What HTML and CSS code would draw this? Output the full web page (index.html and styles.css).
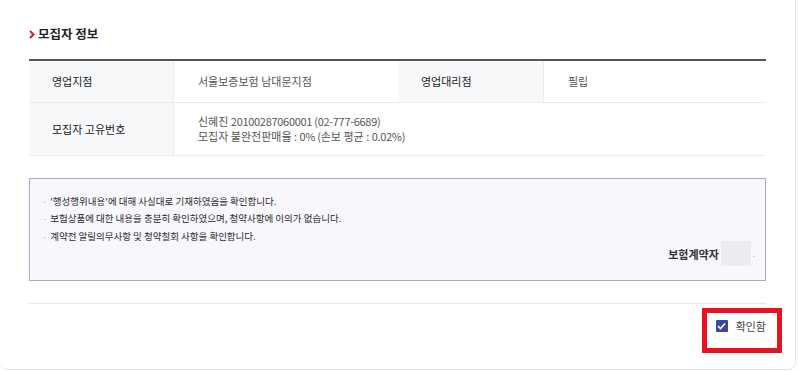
FILE: index.html
```html
<!doctype html>
<html>
    <head>
        <link rel="stylesheet" href="styles.css">
    </head>
    <body>
        <div class="card">
            <h3 class="title">
                <svg class="arrow" width="6" height="9" viewBox="0 0 6 9"><path d="M1 1 L4.5 4.5 L1 8" fill="none" stroke="#c4233a" stroke-width="2"/></svg>
                모집자 정보
            </h3>
            <table class="info">
                <tr class="r1">
                    <th>영업지점</th>
                    <td>서울보증보험 남대문지점</td>
                    <th>영업대리점</th>
                    <td>필립</td>
                </tr>
                <tr class="r2">
                    <th>모집자 고유번호</th>
                    <td colspan="3">신혜진 <span class="num">20100287060001 (02-777-6689)</span><br>모집자 불완전판매율 : <span class="num">0% (</span>손보 평균 : <span class="num">0.02%)</span></td>
                </tr>
            </table>
            <div class="notice">
                <ul>
                    <li>'행성행위내용'에 대해 사실대로 기재하였음을 확인합니다.</li>
                    <li>보험상품에 대한 내용을 충분히 확인하였으며, 청약사항에 이의가 없습니다.</li>
                    <li>계약전 알릴의무사항 및 청약철회 사항을 확인합니다.</li>
                </ul>
                <div class="sign">
                    <span class="who">보험계약자</span>
                    <span class="blur"></span>
                    <span class="dot">.</span>
                </div>
            </div>
            <div class="foot">
                <label class="check">
                    <span class="box"><svg width="9" height="8" viewBox="0 0 9 8"><path d="M1 4 L3.5 6.5 L8 1.5" fill="none" stroke="#fff" stroke-width="1.6"/></svg></span>
                    확인함
                </label>
                <div class="mark"></div>
            </div>
        </div>
    </body>
</html>
```

FILE: styles.css
```css
body {
    margin: 0;
    background: #fff;
    font-family: "Noto Sans CJK KR", "Noto Sans", sans-serif;
}
.card {
    width: 737px;
    height: 345px;
    padding: 24px 29px 0 29px;
    margin-right: 4px;
    border-right: 1px solid #e4e4e4;
    border-bottom: 1px solid #e4e4e4;
    border-radius: 0 0 8px 8px;
    position: relative;
}
.title {
    margin: 0 0 15px;
    height: 20px;
    line-height: 20px;
    font-size: 12.5px;
    font-weight: 700;
    color: #222;
    display: flex;
    align-items: center;
    gap: 3px;
}
.info {
    width: 100%;
    border-collapse: collapse;
    border-top: 2px solid #555;
    font-size: 11px;
}
.info th, .info td {
    text-align: left;
    border-bottom: 1px solid #ebebeb;
    padding: 0;
}
.info th {
    background: #f7f8fa;
    font-weight: 400;
    color: #222;
    padding-left: 23px;
    border-right: 1px solid #ebebeb;
}
.info td {
    color: #555;
    padding-left: 24px;
    line-height: 15px;
}
.info .num {
    letter-spacing: -0.3px;
}
.info th:nth-child(1) { width: 121px; }
.info td:nth-child(2) { width: 200px; }
.info th:nth-child(3) { width: 122px; }
.r1 { height: 42px; }
.r2 { height: 53px; }
.notice {
    margin-top: 22px;
    height: 103px;
    border: 1px solid #a9adc3;
    background: #f8f8fc;
    padding: 14px 15px 0 13px;
    box-sizing: border-box;
}
.notice ul {
    margin: 0;
    padding: 0;
    list-style: none;
    font-size: 9.5px;
    line-height: 17.5px;
    color: #2a2a2a;
}
.notice li::before {
    content: "·";
    font-family: "Liberation Sans", sans-serif;
    color: #999;
    margin-right: 4px;
}
.sign {
    display: flex;
    justify-content: flex-end;
    align-items: center;
    margin-top: -4px;
}
.who {
    font-size: 11px;
    font-weight: 700;
    color: #333;
}
.blur {
    width: 30px;
    height: 25px;
    background: #ececee;
    margin-left: 2px;
}
.dot {
    font-size: 8px;
    color: #aaa;
    margin-left: 2px;
    margin-right: -5px;
}
.foot {
    margin-top: 22px;
    border-top: 1px solid #e6e6e6;
    display: flex;
    justify-content: flex-end;
    padding-top: 14px;
}
.check {
    display: flex;
    align-items: center;
    gap: 8px;
    font-size: 11px;
    color: #444;
}
.box {
    width: 12px;
    height: 12px;
    background: #3a45a8;
    border-radius: 1px;
    display: flex;
    align-items: center;
    justify-content: center;
}
.mark {
    position: absolute;
    left: 702px;
    top: 308px;
    width: 80px;
    height: 45px;
    box-sizing: border-box;
    border: 5px solid #e3141e;
}
```
